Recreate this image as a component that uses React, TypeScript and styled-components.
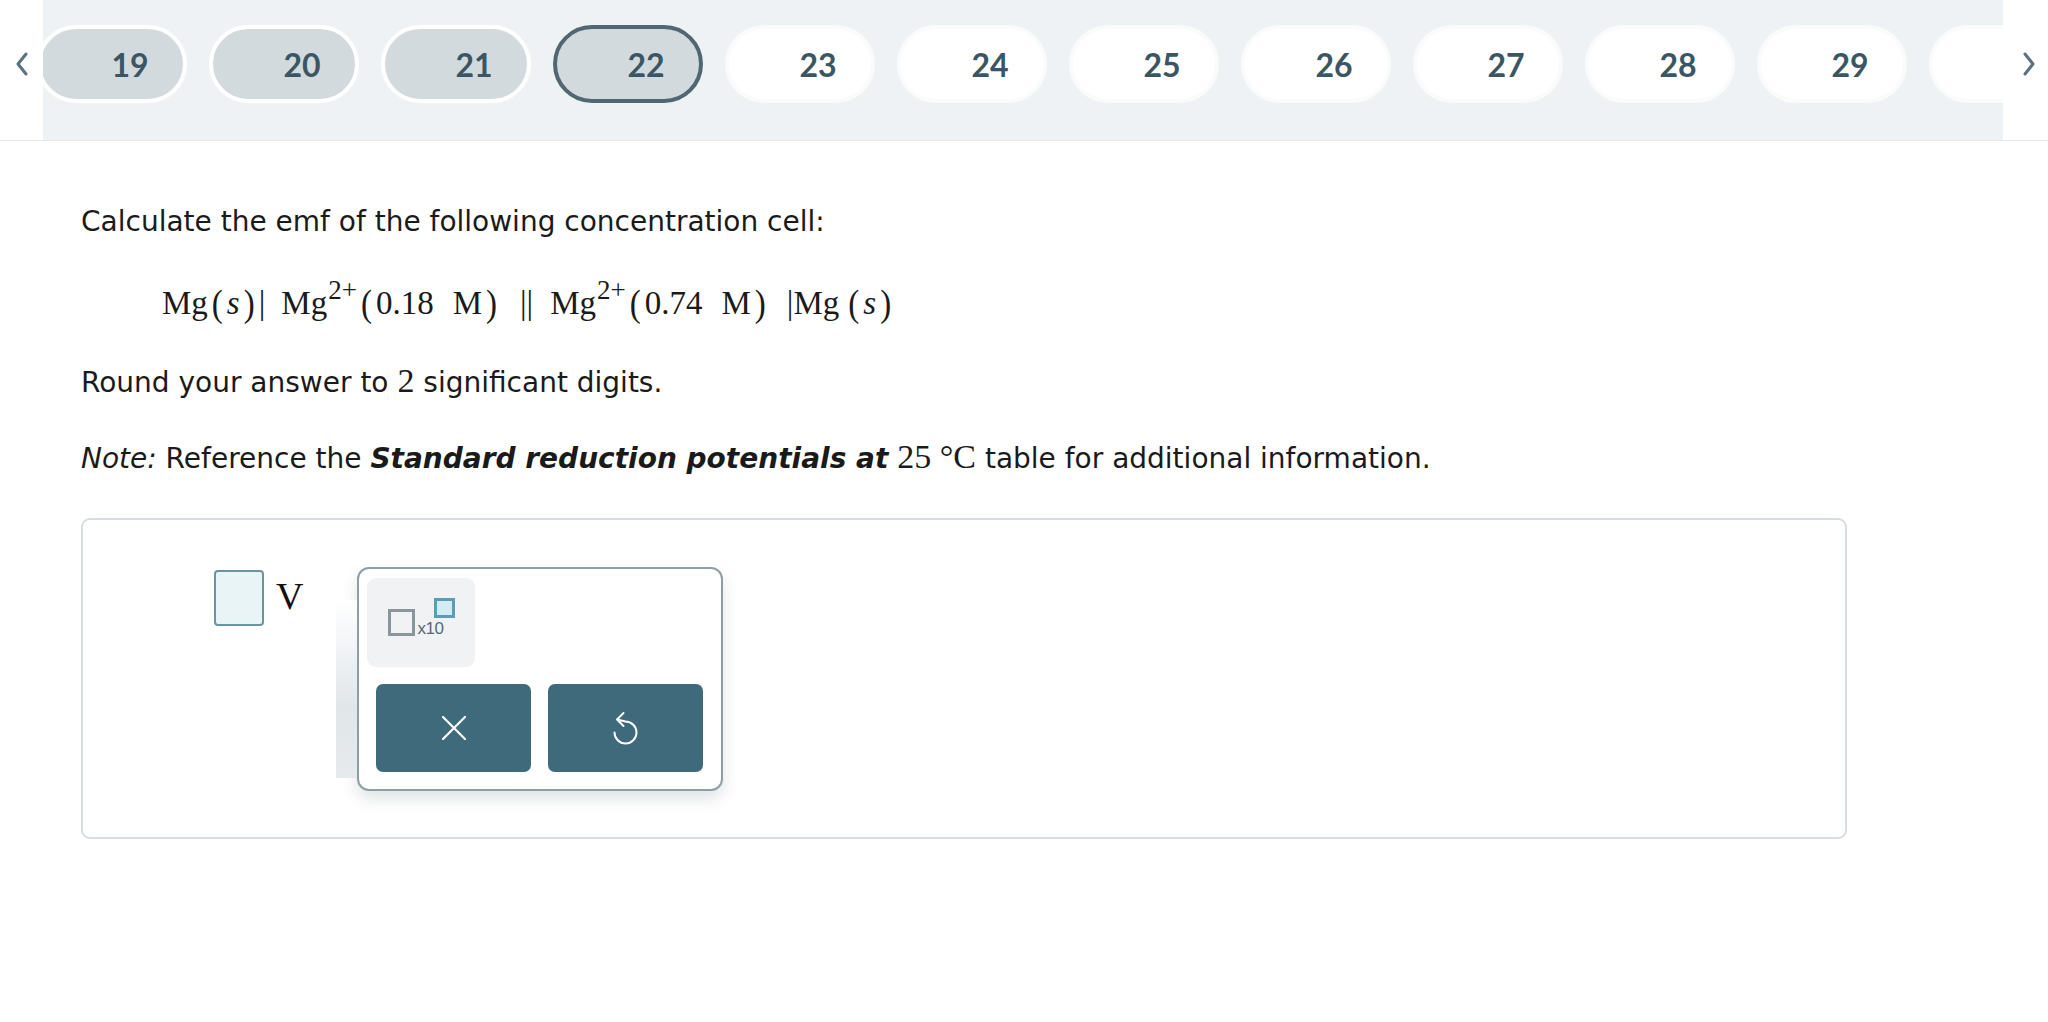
import React from 'react';
import styled, { createGlobalStyle } from 'styled-components';

const GlobalStyle = createGlobalStyle`
  html, body {
    margin: 0;
    padding: 0;
    background: #ffffff;
  }
  body {
    font-family: "DejaVu Sans", Verdana, sans-serif;
    color: #1a1a1a;
  }
`;

type PillState = 'done' | 'current' | 'todo';

const questions: { n: number; state: PillState }[] = [
  { n: 19, state: 'done' },
  { n: 20, state: 'done' },
  { n: 21, state: 'done' },
  { n: 22, state: 'current' },
  { n: 23, state: 'todo' },
  { n: 24, state: 'todo' },
  { n: 25, state: 'todo' },
  { n: 26, state: 'todo' },
  { n: 27, state: 'todo' },
  { n: 28, state: 'todo' },
  { n: 29, state: 'todo' },
  { n: 30, state: 'todo' },
];

export default function App() {
  return (
    <>
      <GlobalStyle />
      <Header>
        <Arrow $side="left" aria-label="previous">
          <svg width="14" height="24" viewBox="0 0 14 24">
            <path d="M11 2 L3 12 L11 22" fill="none" stroke="#5a7180" strokeWidth="3" strokeLinecap="round" strokeLinejoin="round" />
          </svg>
        </Arrow>
        <Strip>
          {questions.map((q, i) => (
            <Pill key={q.n} $state={q.state} $first={i === 0}>
              {q.n === 30 ? '' : q.n}
            </Pill>
          ))}
        </Strip>
        <Arrow $side="right" aria-label="next">
          <svg width="14" height="24" viewBox="0 0 14 24">
            <path d="M3 2 L11 12 L3 22" fill="none" stroke="#5a7180" strokeWidth="3" strokeLinecap="round" strokeLinejoin="round" />
          </svg>
        </Arrow>
      </Header>

      <Content>
        <Para $top={61}>Calculate the emf of the following concentration cell:</Para>
        <Equation>
          Mg<Paren>(</Paren><i>s</i><Paren>)</Paren>|<Gap $w={16} />
          Mg<sup>2+</sup><Paren>(</Paren>0.18<Gap $w={19} />M<Paren>)</Paren><Gap $w={19} />||<Gap $w={17} />
          Mg<sup>2+</sup><Paren>(</Paren>0.74<Gap $w={19} />M<Paren>)</Paren><Gap $w={17} />|Mg<Gap $w={5} />
          <Paren>(</Paren><i>s</i><Paren>)</Paren>
        </Equation>
        <Para $top={38}>
          Round your answer to <Serif>2</Serif> significant digits.
        </Para>
        <Para $top={34}>
          <i>Note:</i> Reference the <b><i>Standard reduction potentials at</i></b> <Serif>25 °C</Serif> table for
          additional information.
        </Para>

        <AnswerBox>
          <AnswerRow>
            <InputSlot />
            <Unit>V</Unit>
            <Popup>
              <TemplateButton aria-label="scientific notation">
                <GraySquare />
                <Exponent>
                  x10
                  <BlueSquare />
                </Exponent>
              </TemplateButton>
              <ActionRow>
                <ActionButton aria-label="clear">
                  <svg width="28" height="28" viewBox="0 0 28 28">
                    <path d="M3 3 L25 25 M25 3 L3 25" stroke="#ffffff" strokeWidth="2.2" strokeLinecap="round" />
                  </svg>
                </ActionButton>
                <ActionButton aria-label="undo">
                  <svg width="25" height="36" viewBox="0 0 25 36">
                    <path
                      d="M10.5 3 L4 9.5 L10.5 16 M4 9.5 L12.5 11.5 A11 11 0 1 1 1.5 22.5"
                      fill="none"
                      stroke="#ffffff"
                      strokeWidth="2"
                      strokeLinecap="round"
                      strokeLinejoin="round"
                    />
                  </svg>
                </ActionButton>
              </ActionRow>
            </Popup>
          </AnswerRow>
        </AnswerBox>
      </Content>
    </>
  );
}

const Header = styled.header`
  display: flex;
  height: 140px;
  border-bottom: 1px solid #e4e8ea;
`;

const Arrow = styled.button<{ $side: 'left' | 'right' }>`
  flex: 0 0 ${p => (p.$side === 'left' ? 43 : 45)}px;
  display: flex;
  justify-content: center;
  align-items: flex-start;
  padding: 52px 0 0 ${p => (p.$side === 'left' ? 0 : 6)}px;
  border: 0;
  background: #ffffff;
  cursor: pointer;
`;

const Strip = styled.div`
  flex: 1;
  display: flex;
  gap: 22px;
  align-items: flex-start;
  padding-top: 25px;
  background: #eef2f4;
  overflow: hidden;
`;

const Pill = styled.div<{ $state: PillState; $first: boolean }>`
  flex: 0 0 150px;
  height: 78px;
  box-sizing: border-box;
  margin-left: ${p => (p.$first ? '-6px' : '0')};
  display: flex;
  align-items: center;
  justify-content: center;
  padding-left: 36px;
  border-radius: 39px;
  border: 4px solid
    ${p => (p.$state === 'current' ? '#506771' : p.$state === 'done' ? '#ffffff' : '#fafbfb')};
  background: ${p => (p.$state === 'todo' ? '#ffffff' : '#d3dade')};
  color: #3a5664;
  font-family: Lato, "Open Sans", sans-serif;
  font-weight: 700;
  font-size: 32px;
  cursor: pointer;
`;

const Content = styled.main`
  padding: 0 0 0 81px;
`;

const Para = styled.p<{ $top: number }>`
  margin: ${p => p.$top}px 0 0;
  font-size: 28px;
  line-height: 40px;
  white-space: nowrap;

  b {
    font-weight: 700;
  }
`;

const Serif = styled.span`
  font-family: "Liberation Serif", "Times New Roman", serif;
  font-size: 34px;
`;

const Equation = styled.div`
  margin-top: 41px;
  padding-left: 81px;
  font-family: "Liberation Serif", "Times New Roman", serif;
  font-size: 33px;
  line-height: 40px;
  white-space: nowrap;

  sup {
    font-size: 27px;
    margin-left: 1px;
    position: relative;
    top: -3px;
    vertical-align: super;
    line-height: 0;
  }
`;

const Paren = styled.span`
  display: inline-block;
  transform: scaleY(1.14);
  margin: 0 4px;
`;

const Gap = styled.span<{ $w: number }>`
  display: inline-block;
  width: ${p => p.$w}px;
`;

const AnswerBox = styled.section`
  margin-top: 39px;
  width: 1766px;
  height: 321px;
  box-sizing: border-box;
  border: 2px solid #d9dde0;
  border-radius: 9px;
  padding: 50px 0 0 131px;
`;

const AnswerRow = styled.div`
  display: flex;
  align-items: flex-start;
`;

const InputSlot = styled.div`
  width: 50px;
  height: 56px;
  box-sizing: border-box;
  background: #e9f4f7;
  border: 2px solid #6a94a4;
  border-radius: 4px;
`;

const Unit = styled.span`
  margin: 6px 0 0 12px;
  font-family: "Liberation Serif", "Times New Roman", serif;
  font-size: 38px;
  line-height: 40px;
  color: #111;
`;

const Popup = styled.div`
  position: relative;
  margin: -3px 0 0 54px;
  width: 366px;
  height: 224px;
  box-sizing: border-box;
  padding: 9px 0 0 8px;
  background: #ffffff;
  border: 2px solid #8c9fa8;
  border-radius: 12px;
  box-shadow: 0 8px 16px rgba(40, 60, 70, 0.14);

  &::before {
    content: '';
    position: absolute;
    left: -23px;
    top: 31px;
    width: 21px;
    height: 178px;
    background: linear-gradient(#ffffff, #e1e6e9 60%, #e6eaec);
  }
`;

const TemplateButton = styled.button`
  position: relative;
  display: flex;
  align-items: flex-end;
  width: 108px;
  height: 89px;
  box-sizing: border-box;
  padding: 0 0 31px 21px;
  border: 0;
  border-radius: 9px;
  background: #f1f2f3;
  cursor: pointer;
`;

const GraySquare = styled.span`
  display: block;
  width: 27px;
  height: 27px;
  box-sizing: border-box;
  border: 3px solid #8a969d;
`;

const Exponent = styled.span`
  position: relative;
  margin-left: 2px;
  font-family: "Liberation Sans", Arial, sans-serif;
  font-size: 17px;
  line-height: 15px;
  letter-spacing: -0.5px;
  color: #5b676e;
`;

const BlueSquare = styled.span`
  position: absolute;
  left: 17px;
  top: -23px;
  width: 21px;
  height: 20px;
  box-sizing: border-box;
  background: #d5ebf3;
  border: 3px solid #5e9cb4;
`;

const ActionRow = styled.div`
  display: flex;
  gap: 17px;
  margin: 17px 0 0 9px;
`;

const ActionButton = styled.button`
  width: 155px;
  height: 88px;
  display: flex;
  align-items: center;
  justify-content: center;
  border: 0;
  border-radius: 7px;
  background: #3e6a7b;
  cursor: pointer;
`;
